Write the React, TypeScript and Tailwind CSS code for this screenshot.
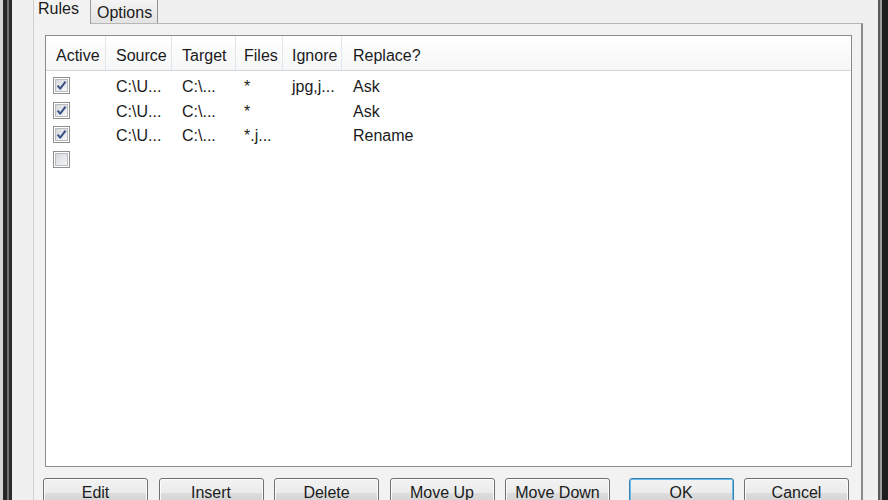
const columns = [
  { label: 'Active', w: 'w-[60px]', pl: 'pl-[10px]' },
  { label: 'Source', w: 'w-[66px]', pl: 'pl-[10px]' },
  { label: 'Target', w: 'w-[64px]', pl: 'pl-[10px]' },
  { label: 'Files', w: 'w-[47px]', pl: 'pl-[8px]' },
  { label: 'Ignore', w: 'w-[59px]', pl: 'pl-[9px]' },
  { label: 'Replace?', w: 'flex-1', pl: 'pl-[11px]' },
];

interface Rule {
  active: boolean;
  source: string;
  target: string;
  files: string;
  ignore: string;
  replace: string;
}

const rules: Rule[] = [
  { active: true, source: 'C:\\U...', target: 'C:\\...', files: '*', ignore: 'jpg,j...', replace: 'Ask' },
  { active: true, source: 'C:\\U...', target: 'C:\\...', files: '*', ignore: '', replace: 'Ask' },
  { active: true, source: 'C:\\U...', target: 'C:\\...', files: '*.j...', ignore: '', replace: 'Rename' },
  { active: false, source: '', target: '', files: '', ignore: '', replace: '' },
];

const buttons = ['Edit', 'Insert', 'Delete', 'Move Up', 'Move Down'];

function CheckBox({ checked }: { checked: boolean }) {
  return (
    <div className="mt-[3px] ml-[7px] flex h-[17px] w-[17px] items-center justify-center border border-[#8e8f8f] bg-white">
      <div className="flex h-[13px] w-[13px] items-center justify-center border border-[#b8bcc2] bg-[linear-gradient(135deg,#d6d9de,#f6f6f6)]">
        {checked && (
          <svg width="11" height="11" viewBox="0 0 11 11">
            <path d="M1.6 5.6 L4.2 8.6 L9.6 1.6" fill="none" stroke="#3f538a" strokeWidth="2.1" strokeLinejoin="round" />
          </svg>
        )}
      </div>
    </div>
  );
}

function Button({ label, primary }: { label: string; primary?: boolean }) {
  return (
    <div
      className={`h-[30px] w-[105px] shrink-0 rounded-[3px] border pt-[5px] text-center leading-[18px] ${
        primary
          ? 'border-[#3c7fb1] bg-[linear-gradient(#f2f2f2_0%,#ebebeb_50%,#dddddd_50%,#cfcfcf_100%)] shadow-[inset_0_0_0_1px_#6cbce8]'
          : 'border-[#707070] bg-[linear-gradient(#f2f2f2_0%,#ebebeb_50%,#dddddd_50%,#cfcfcf_100%)] shadow-[inset_0_0_0_1px_#fbfbfb]'
      }`}
    >
      {label}
    </div>
  );
}

export default function App() {
  return (
    <div className="flex h-[500px] w-[888px] overflow-hidden bg-[#f0f0f0] font-['Liberation_Sans',Arial,sans-serif] text-[16px] text-[#1b1b1b]">
      {/* window frame, left */}
      <div className="flex shrink-0">
        <div className="w-[3px] bg-[#d4d4d4]" />
        <div className="w-[4px] bg-[#262626]" />
        <div className="w-[2px] bg-[#707070]" />
        <div className="w-[3px] bg-[#2c2c2c]" />
      </div>

      <div className="flex flex-1 flex-col pl-[21px] pr-[15px]">
        {/* tabs */}
        <div className="flex h-[24px] shrink-0">
          <div className="relative z-10 h-[24px] w-[58px] border-l border-r border-l-[#cfcfcf] border-r-[#9a9a9a] bg-[#f2f2f2] pl-[4px] leading-[18px]">
            Rules
          </div>
          <div className="h-[23px] w-[67px] border-r border-[#8f9299] bg-[linear-gradient(#f4f4f4,#e3e3e3)] pl-[6px] pt-[4px] leading-[18px]">
            Options
          </div>
        </div>

        {/* tab page */}
        <div className="-mt-px flex flex-1 flex-col border-t border-l border-r-2 border-t-[#b7b7b7] border-l-[#d2d2d2] border-r-[#8a8a8a] bg-[#f2f2f2] pl-[11px] pr-[9px] pt-[11px]">
          <div className="flex h-[432px] shrink-0 flex-col border border-[#8b8b8b] bg-white">
            <div className="flex h-[35px] shrink-0 border-b border-[#d5d5d5] bg-[linear-gradient(#ffffff,#f5f6f7)]">
              {columns.map((c, i) => (
                <div
                  key={c.label}
                  className={`${c.w} ${c.pl} pt-[11px] leading-[18px] ${
                    i < columns.length - 1 ? 'border-r border-[#e2e5e9]' : ''
                  }`}
                >
                  {c.label}
                </div>
              ))}
            </div>

            <div className="flex flex-col pt-[3px]">
              {rules.map((r, i) => (
                <div key={i} className="flex h-[24.5px] items-start">
                  <div className="w-[60px]">
                    <CheckBox checked={r.active} />
                  </div>
                  <div className="w-[66px] pl-[10px] pt-[4px] leading-[18px]">{r.source}</div>
                  <div className="w-[64px] pl-[10px] pt-[4px] leading-[18px]">{r.target}</div>
                  <div className="w-[47px] pl-[8px] pt-[4px] leading-[18px]">{r.files}</div>
                  <div className="w-[59px] pl-[9px] pt-[4px] leading-[18px]">{r.ignore}</div>
                  <div className="flex-1 pl-[11px] pt-[4px] leading-[18px]">{r.replace}</div>
                </div>
              ))}
            </div>
          </div>

          {/* buttons */}
          <div className="-ml-[2px] mt-[11px] flex gap-[10.5px]">
            {buttons.map((b) => (
              <Button key={b} label={b} />
            ))}
            <div className="ml-[8px]">
              <Button label="OK" primary />
            </div>
            <Button label="Cancel" />
          </div>
        </div>
      </div>

      {/* window frame, right */}
      <div className="flex shrink-0">
        <div className="w-[2px] bg-[#595959]" />
        <div className="w-[2px] bg-[#9c9c9c]" />
        <div className="w-[6px] bg-[#1e1e1e]" />
      </div>
    </div>
  );
}
